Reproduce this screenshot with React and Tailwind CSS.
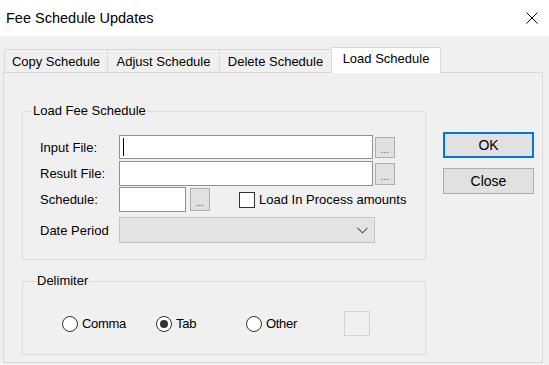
export default function App() {
  const Dots = ({ h }) => (
    <div className={`w-[20px] ${h} bg-[#e1e1e1] border border-[#adadad] flex items-end justify-center pb-[2px] text-[10px] leading-none text-[#555]`}>
      ...
    </div>
  );
  const Radio = ({ checked, label, w }) => (
    <div className={`${w} flex items-center`}>
      <div className="w-[16px] h-[16px] rounded-full border border-[#333] bg-white flex items-center justify-center shrink-0">
        {checked && <div className="w-[8px] h-[8px] rounded-full bg-[#333]" />}
      </div>
      <span className="ml-[4px] text-[13px] leading-none tracking-[-0.3px]">{label}</span>
    </div>
  );
  return (
    <div className="w-[549px] h-[365px] bg-[#f0f0f0] overflow-hidden text-black font-['Liberation_Sans',Arial,sans-serif]">
      <div className="h-[36px] bg-white flex items-center justify-between pl-[6px] pr-[11px]">
        <span className="text-[14.5px] leading-none">Fee Schedule Updates</span>
        <svg width="12" height="12" viewBox="0 0 12 12">
          <path d="M0.5 0.5 L11.5 11.5 M11.5 0.5 L0.5 11.5" stroke="#000" strokeWidth="1" fill="none" />
        </svg>
      </div>

      <div className="mt-[11px] pl-[4px] flex items-end h-[26px] -mb-px relative z-10 text-[13px] leading-none">
        <div className="w-[104px] h-[23px] mb-[1px] bg-[#f0f0f0] border-l border-t border-r border-[#d9d9d9] flex items-center justify-center">Copy Schedule</div>
        <div className="w-[112px] h-[23px] mb-[1px] bg-[#f0f0f0] border-t border-r border-[#d9d9d9] flex items-center justify-center">Adjust Schedule</div>
        <div className="w-[112px] h-[23px] mb-[1px] bg-[#f0f0f0] border-t border-r border-[#d9d9d9] flex items-center justify-center">Delete Schedule</div>
        <div className="-ml-px w-[110px] h-[26px] bg-white border-l border-t border-r border-[#d9d9d9] flex items-center justify-center pb-[4px]">Load Schedule</div>
      </div>

      <div className="ml-[3px] w-[540px] h-[291px] border border-[#d9d9d9] flex text-[13px]">
        <div className="ml-[18px] w-[404px]">
          <fieldset className="mt-[30px] border border-[#dcdcdc]">
            <legend className="ml-[9px] px-[1px] leading-[16px]">Load Fee Schedule</legend>
            <div className="pl-[17px] pt-[16px] pb-[16px]">
              <div className="h-[24px] flex items-center">
                <span className="w-[79px] leading-none">Input File:</span>
                <div className="w-[254px] h-[24px] border border-[#8f8f8f] bg-white flex items-center pl-[3px]">
                  <div className="w-px h-[18px] bg-black" />
                </div>
                <div className="ml-[2px]"><Dots h="h-[21px]" /></div>
              </div>
              <div className="mt-[2px] h-[25px] flex items-center">
                <span className="w-[79px] leading-none">Result File:</span>
                <div className="w-[254px] h-[25px] border border-[#8f8f8f] bg-white" />
                <div className="ml-[2px]"><Dots h="h-[22px]" /></div>
              </div>
              <div className="mt-[1px] h-[25px] flex items-center">
                <span className="w-[79px] leading-none">Schedule:</span>
                <div className="w-[67px] h-[25px] border border-[#8f8f8f] bg-white" />
                <div className="ml-[4px]"><Dots h="h-[23px]" /></div>
                <div className="ml-[29px] w-[16px] h-[16px] border border-[#333] bg-white" />
                <span className="ml-[4px] leading-none">Load In Process amounts</span>
              </div>
              <div className="mt-[5px] h-[26px] flex items-center">
                <span className="w-[79px] leading-none">Date Period</span>
                <div className="w-[256px] h-[26px] bg-[#e3e3e3] border border-[#c4c4c4] flex items-center justify-end pr-[6px]">
                  <svg width="11" height="7" viewBox="0 0 11 7">
                    <path d="M0.5 0.8 L5.5 5.8 L10.5 0.8" stroke="#606060" strokeWidth="1.2" fill="none" />
                  </svg>
                </div>
              </div>
            </div>
          </fieldset>

          <fieldset className="mt-[13px] border border-[#dcdcdc]">
            <legend className="ml-[13px] px-[1px] leading-[16px]">Delimiter</legend>
            <div className="pl-[39px] pt-[22px] pb-[18px]">
              <div className="h-[25px] flex items-center">
                <Radio w="w-[94px]" label="Comma" />
                <Radio w="w-[90px]" label="Tab" checked />
                <Radio w="w-[98px]" label="Other" />
                <div className="w-[26px] h-[25px] border border-[#d3d3d3] bg-[#f0f0f0]" />
              </div>
            </div>
          </fieldset>
        </div>

        <div className="ml-[17px] w-[91px] mt-[59px] flex flex-col gap-[10px]">
          <div className="h-[26px] bg-[#e1e1e1] border-2 border-[#0078d7] flex items-center justify-center text-[14px] leading-none">OK</div>
          <div className="h-[26px] bg-[#e1e1e1] border border-[#adadad] flex items-center justify-center text-[14px] leading-none">Close</div>
        </div>
      </div>
    </div>
  );
}
